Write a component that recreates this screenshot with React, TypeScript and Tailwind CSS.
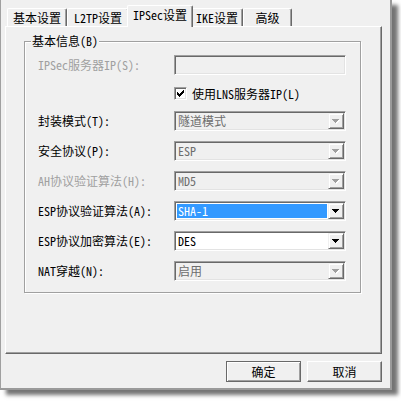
import clsx from "clsx";

const Arrow = ({ disabled }: { disabled?: boolean }) => (
  <svg width="8" height="5" viewBox="0 0 8 5" shapeRendering="crispEdges">
    {disabled && <path d="M1 1h7v1h-1v1h-1v1h-1v1h-1v-1h-1v-1h-1v-1h-1z" fill="#ffffff" />}
    <path d="M0 0h7v1h-1v1h-1v1h-1v1h-1v-1h-1v-1h-1v-1h-1z" fill={disabled ? "#a0a0a0" : "#000000"} />
  </svg>
);

const Sunken = "border border-t-[#a0a0a0] border-l-[#a0a0a0] border-b-white border-r-white shadow-[inset_1px_1px_0_#696969,inset_-1px_-1px_0_#e3e3e3]";

const Select = ({ value, disabled, selected }: { value: string; disabled?: boolean; selected?: boolean }) => (
  <div
    className={clsx(
      "flex h-[20px] w-[172px] p-[1px]",
      Sunken,
      disabled ? "bg-[#f0f0f0] text-[#6d6d6d]" : "bg-white text-black"
    )}
  >
    <div className="flex flex-1 p-[1px]">
      <div className={clsx("flex flex-1 items-center pl-[1px]", selected && "bg-[#3399ff] text-white")}>{value}</div>
    </div>
    <div className="flex h-[16px] w-[16px] items-center justify-center border border-t-[#f0f0f0] border-l-[#f0f0f0] border-b-[#696969] border-r-[#696969] bg-[#f0f0f0] shadow-[inset_1px_1px_0_#fff,inset_-1px_-1px_0_#a0a0a0]">
      <Arrow disabled={disabled} />
    </div>
  </div>
);

const Row = ({ label, disabled, children }: { label: string; disabled?: boolean; children: React.ReactNode }) => (
  <div className="flex h-[20px] items-center">
    <span className={clsx("w-[136px] whitespace-nowrap", disabled ? "text-[#a0a0a0]" : "text-black")}>{label}</span>
    {children}
  </div>
);

const tabs = [
  { name: "基本设置", w: "w-[60px]" },
  { name: "L2TP设置", w: "w-[62px]" },
  { name: "IPSec设置", w: "w-[66px]", active: true },
  { name: "IKE设置", w: "w-[52px]" },
  { name: "高级", w: "w-[49px]" },
];

export default function App() {
  return (
    <div className="h-[401px] w-[401px] bg-white text-[12px] leading-[14px] text-black font-['Noto_Sans_Mono_CJK_SC','Noto_Sans_CJK_SC','Liberation_Mono',monospace]">
      <div className="h-[390px] w-[392px] border-b-2 border-l border-r-2 border-b-[#9a9a9a] border-l-[#a0a0a0] border-r-[#9a9a9a] bg-[#f0f0f0] shadow-[6px_5px_4px_rgba(0,0,0,0.55)]">
        {/* tabs */}
        <div className="relative z-10 flex h-[26px] items-end pl-[6px]">
          {tabs.map((t) =>
            t.active ? (
              <div
                key={t.name}
                className={clsx(
                  "relative z-10 -mx-[2px] -mb-[1px] flex h-[22px] items-center justify-center rounded-t-[2px] border-l border-r border-t border-l-white border-r-[#696969] border-t-white bg-[#f0f0f0] pb-[3px] shadow-[inset_-1px_0_0_#a0a0a0]",
                  t.w
                )}
              >
                {t.name}
              </div>
            ) : (
              <div
                key={t.name}
                className={clsx(
                  "flex h-[18px] items-center justify-center rounded-t-[2px] border-l border-r border-t border-l-white border-r-[#696969] border-t-white shadow-[inset_-1px_0_0_#a0a0a0]",
                  t.w
                )}
              >
                {t.name}
              </div>
            )
          )}
        </div>

        {/* pane */}
        <div className="ml-[4px] h-[328px] w-[377px] border border-b-[#696969] border-l-white border-r-[#696969] border-t-white shadow-[inset_-1px_-1px_0_#a0a0a0] pt-[14px]">
          <div className="relative ml-[18px] h-[252px] w-[337px] border border-[#a0a0a0] shadow-[inset_1px_1px_0_#fff,1px_1px_0_#fff]">
            <span className="absolute left-[6px] top-[-9px] bg-[#f0f0f0] px-[1px] leading-[16px]">基本信息(B)</span>
            <div className="flex flex-col pl-[13px] pt-[13px]">
              <Row label="IPSec服务器IP(S):" disabled>
                <div className={clsx("h-[20px] w-[172px] bg-[#f0f0f0]", Sunken)} />
              </Row>
              <div className="ml-[136px] mt-[12px] flex h-[13px] items-center gap-[5px]">
                <div className={clsx("flex h-[13px] w-[13px] items-center justify-center bg-white", Sunken)}>
                  <svg width="7" height="7" viewBox="0 0 7 7" shapeRendering="crispEdges">
                    <path d="M6 0h1v3h-1v1h-1v1h-1v1h-1v1h-1v-1h-1v-1h-1v-3h1v1h1v1h1v-1h1v-1h1z" fill="#000" />
                  </svg>
                </div>
                <span>使用LNS服务器IP(L)</span>
              </div>
              <div className="mt-[11px] flex flex-col gap-[10px]">
                <Row label="封装模式(T):">
                  <Select value="隧道模式" disabled />
                </Row>
                <Row label="安全协议(P):">
                  <Select value="ESP" disabled />
                </Row>
                <Row label="AH协议验证算法(H):" disabled>
                  <Select value="MD5" disabled />
                </Row>
                <Row label="ESP协议验证算法(A):">
                  <Select value="SHA-1" selected />
                </Row>
                <Row label="ESP协议加密算法(E):">
                  <Select value="DES" />
                </Row>
                <Row label="NAT穿越(N):">
                  <Select value="启用" disabled />
                </Row>
              </div>
            </div>
          </div>
        </div>

        {/* buttons */}
        <div className="ml-[4px] mt-[7px] flex w-[377px] justify-end gap-[6px]">
          <button className="flex h-[21px] w-[75px] items-center justify-center border border-[#696969] bg-[#f0f0f0] shadow-[inset_1px_1px_0_#fff,inset_-1px_-1px_0_#a0a0a0]">
            确定
          </button>
          <button className="flex h-[21px] w-[75px] items-center justify-center border border-b-[#696969] border-l-white border-r-[#696969] border-t-white bg-[#f0f0f0] shadow-[inset_-1px_-1px_0_#a0a0a0]">
            取消
          </button>
        </div>
      </div>
    </div>
  );
}
